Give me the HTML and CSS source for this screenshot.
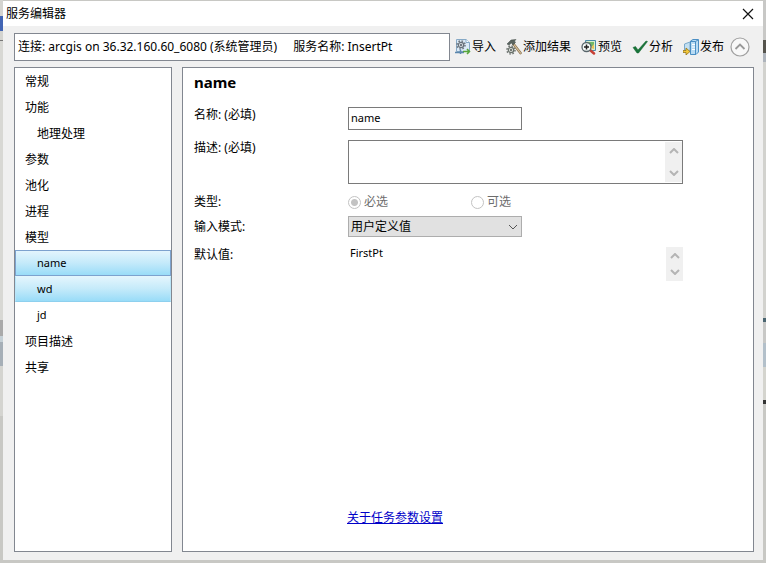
FILE: index.html
```html
<!DOCTYPE html>
<html lang="zh-CN">
<head>
    <meta charset="utf-8">
    <title>服务编辑器</title>
    <link rel="stylesheet" href="styles.css">
</head>
<body>

<div class="window">
  <header class="titlebar">
    <span>服务编辑器</span>
    <button class="close" type="button" aria-label="关闭">
      <svg width="12" height="12" viewBox="0 0 12 12"><path d="M1 1L11 11M11 1L1 11" stroke="#111" stroke-width="1.2"/></svg>
    </button>
  </header>

  <div class="topbar">
    <div class="connection">
      <span>连接: arcgis on 36.32.160.60_6080 (系统管理员)</span>
      <span>服务名称: InsertPt</span>
    </div>
    <div class="toolbar">
      <button class="tool" type="button">
        <svg width="16" height="16" viewBox="0 0 16 16">
          <path d="M1.500 .500H11L14.500 3.500V12.500H1.500Z" fill="#dcebf7" stroke="#86a9c6"/>
          <path d="M11 .500V3.500H14.500" fill="#fff" stroke="#86a9c6"/>
          <circle cx="6" cy="6" r="4" fill="none" stroke="#747c85" stroke-width="1.600" stroke-dasharray="1.600 1.540"/>
          <circle cx="6" cy="6" r="2.700" fill="#d5dade" stroke="#68727c" stroke-width="1.200"/>
          <circle cx="6" cy="6" r="1" fill="#505a64"/>
          <path d="M0 13.500H9M5.500 10.500V15" stroke="#5c87ad" stroke-width="1.500"/>
          <path d="M8 12.500H14M12 10L14.500 12.500L12 15" fill="none" stroke="#57a63b" stroke-width="1.500"/>
        </svg>导入
      </button>
      <button class="tool" type="button">
        <svg width="16" height="16" viewBox="0 0 16 16">
          <circle cx="5" cy="11" r="4" fill="none" stroke="#747a76" stroke-width="1.600" stroke-dasharray="1.600 1.540"/>
          <circle cx="5" cy="11" r="2.700" fill="#d9dcd8" stroke="#68706a" stroke-width="1.200"/>
          <circle cx="5" cy="11" r="1" fill="#505750"/>
          <path d="M7.500 5L14.500 14" stroke="#8a7350" stroke-width="2.600" stroke-linecap="round"/>
          <path d="M7.500 5L14.500 14" stroke="#d9c49f" stroke-width="1.200" stroke-linecap="round"/>
          <path d="M1 5L5 1L10 .500L8.500 2L9.500 3.500L7 6L5.500 4L3 6Z" fill="#59635f" stroke="#3f4844" stroke-width=".5"/>
        </svg>添加结果
      </button>
      <button class="tool" type="button">
        <svg width="16" height="16" viewBox="0 0 16 16">
          <path d="M4.500 1.500H14.500V11.500H4.500Z" fill="#d8efce" stroke="#4b8ba8"/>
          <path d="M6 3H13V6L10 8L8 5L6 6Z" fill="#72b869"/>
          <path d="M10 9L13 5V10Z" fill="#eec04f"/>
          <path d="M9 11L13 14.500" stroke="#c63f34" stroke-width="2.500" stroke-linecap="round"/>
          <circle cx="5.500" cy="8" r="4.500" fill="#f4faf7" stroke="#58656a" stroke-width="1.300"/>
          <path d="M3 8H8M5.500 5.500V10.500" stroke="#222" stroke-width="1.500"/>
        </svg>预览
      </button>
      <button class="tool" type="button">
        <svg width="16" height="16" viewBox="0 0 16 16">
          <path d="M1 8.500L3.500 7.500L6 11L14 2L15.500 2.500L6.500 14H5Z" fill="#19743a" stroke="#14642c" stroke-width=".5"/>
        </svg>分析
      </button>
      <button class="tool" type="button">
        <svg width="16" height="16" viewBox="0 0 16 16">
          <path d="M1.500 5L7 3V12L1.500 11Z" fill="#c2dff1" stroke="#79a9cc"/>
          <path d="M7.500 2L10 .500H15.500V13L13 15.500H7.500Z" fill="#b8dbf3" stroke="#4b8fc4"/>
          <path d="M8 2.500H12.500V15M12.500 2.500L15 1" fill="none" stroke="#4b8fc4"/>
          <path d="M9 5.500H12M9 8H12M9 10.500H12" stroke="#fff"/>
          <path d="M0 11.500H3V9L7 12.500L3 16V13.500H0Z" fill="#f4c83b" stroke="#94731b" stroke-width=".8"/>
        </svg>发布
      </button>
      <button class="collapse" type="button" aria-label="折叠">
        <svg width="20" height="20" viewBox="0 0 20 20">
          <circle cx="10" cy="10" r="9" fill="#f8f8f8" stroke="#a0a0a0" stroke-width="1.200"/>
          <path d="M5.500 12L10 7.500L14.500 12" fill="none" stroke="#999" stroke-width="1.800"/>
        </svg>
      </button>
    </div>
  </div>

  <div class="content">
    <nav class="sidebar">
      <a href="#">常规</a>
      <a href="#">功能</a>
      <a class="child" href="#">地理处理</a>
      <a href="#">参数</a>
      <a href="#">池化</a>
      <a href="#">进程</a>
      <a href="#">模型</a>
      <a class="child param selected current" href="#">name</a>
      <a class="child param selected" href="#">wd</a>
      <a class="child param" href="#">jd</a>
      <a href="#">项目描述</a>
      <a href="#">共享</a>
    </nav>

    <main class="panel">
      <h1>name</h1>
      <form>
        <div class="row">
          <label for="name">名称: (必填)</label>
          <input class="text" id="name" type="text" value="name">
        </div>
        <div class="row">
          <label for="desc">描述: (必填)</label>
          <div class="area boxed">
            <textarea id="desc"></textarea>
            <div class="scroll">
              <svg width="10" height="6" viewBox="0 0 10 6"><path d="M1 5L5 1L9 5"/></svg>
              <svg width="10" height="6" viewBox="0 0 10 6"><path d="M1 1L5 5L9 1"/></svg>
            </div>
          </div>
        </div>
        <div class="row tight" role="radiogroup" aria-labelledby="type">
          <span class="label" id="type">类型:</span>
          <div class="radios">
            <label><input type="radio" name="type" checked disabled>必选</label>
            <label><input type="radio" name="type" disabled>可选</label>
          </div>
        </div>
        <div class="row middle">
          <label for="mode">输入模式:</label>
          <div class="dropdown">
            <select id="mode">
              <option>用户定义值</option>
            </select>
            <svg width="10" height="6" viewBox="0 0 10 6"><path d="M1 1L5 5L9 1"/></svg>
          </div>
        </div>
        <div class="row">
          <label for="default">默认值:</label>
          <div class="area">
            <textarea id="default">FirstPt</textarea>
            <div class="scroll">
              <svg width="10" height="6" viewBox="0 0 10 6"><path d="M1 5L5 1L9 5"/></svg>
              <svg width="10" height="6" viewBox="0 0 10 6"><path d="M1 1L5 5L9 1"/></svg>
            </div>
          </div>
        </div>
      </form>
      <a class="help" href="#">关于任务参数设置</a>
    </main>
  </div>
</div>

</body>
</html>
```
FILE: styles.css
```css
* {
  box-sizing: border-box;
}

/* the desktop shows as a thin edge round the window */
body {
  margin: 0;
  padding: 1px 3px 3px;
  min-height: 100vh;
  display: flex;
  background:
    linear-gradient(#d4d4d0 16px, #4265b4 16px, #4265b4 31px, #d4d4d0 31px, #d4d4d0 40px, #777 40px, #777 41px, #d8d8d4 41px, #d8d8d4 320px, #aaa 320px, #aaa 336px, #c5d0d6 336px, #c5d0d6 342px, #a6afb7 342px, #a6afb7 366px, #d4d4d0 366px, #d4d4d0 416px, #c8c8c4 416px) left / 3px 100% no-repeat,
    linear-gradient(#c8c8c6 40px, #55534c 40px, #55534c 53px, #aeb4bc 53px, #aeb4bc 62px, #d2d2ce 62px, #d2d2ce 318px, #4a6570 318px, #4a6570 322px, #c8c8c6 322px, #c8c8c6 343px, #b3c0ca 343px, #b3c0ca 367px, #d4d4ce 367px, #d4d4ce 400px, #333 400px, #333 404px, #c8c8c4 404px) right / 3px 100% no-repeat,
    #c8c8c4;
  font-family: "Noto Sans", "Noto Sans CJK SC", sans-serif;
  font-size: 12px;
  line-height: 16px;
  color: #000;
}

button, input, select, textarea {
  font: inherit;
  color: inherit;
}

button {
  border: 0;
  padding: 0;
  background: none;
}

svg {
  display: block;
  flex: none;
}

.window {
  flex: 1;
  display: flex;
  flex-direction: column;
  background: #f0f0f0;
}

.titlebar {
  display: flex;
  justify-content: space-between;
  align-items: center;
  height: 25px;
  padding: 0 9px 0 3px;
  background: #fff;
}

.topbar {
  display: flex;
  align-items: center;
  gap: 5px;
  padding: 7px 13px 6px 11px;
}

.connection {
  flex: 1;
  display: flex;
  align-items: center;
  gap: 16px;
  height: 28px;
  padding: 0 3px;
  border: 1px solid #828790;
  background: #fff;
  white-space: nowrap;
}

.toolbar {
  display: flex;
  align-items: center;
  gap: 10px;
}

.tool {
  display: flex;
  align-items: center;
  gap: 1px;
  white-space: nowrap;
}

.collapse {
  margin-left: -4px;
}

.content {
  flex: 1;
  display: flex;
  gap: 10px;
  padding: 0 9px 8px 11px;
}

.sidebar {
  width: 158px;
  border: 1px solid #828790;
  background: #fff;
}

.sidebar a {
  display: block;
  height: 26px;
  padding: 5px 9px 3px;
  border: 1px solid transparent;
  color: #000;
  text-decoration: none;
}

.sidebar .child {
  padding-left: 21px;
}

.sidebar .param {
  padding-top: 4px;
  font-size: 11px;
}

.sidebar .selected {
  border-color: #e2f6fd #b9e5f8 #8ed0ee;
  background: linear-gradient(#e3f5fd, #c4eafa 50%, #99dcf8);
}

.sidebar .current {
  border-color: #7da2ce;
}

.panel {
  flex: 1;
  display: flex;
  flex-direction: column;
  padding: 0 11px 25px;
  border: 1px solid #828790;
  background: #fff;
}

h1 {
  margin: 4px 0 15px;
  font-size: 15px;
  line-height: 20px;
}

.row {
  display: flex;
  align-items: flex-start;
  margin-bottom: 10px;
}

.row > label, .label {
  width: 154px;
}

.tight {
  margin-bottom: 6px;
}

.middle {
  align-items: center;
}

.text {
  width: 174px;
  height: 23px;
  padding: 0 2px 2px;
  border: 1px solid #7a7a7a;
  font-size: 11px;
}

.area {
  display: flex;
  width: 335px;
  height: 34px;
}

.boxed {
  height: 44px;
  padding: 1px 0;
  border: 1px solid #7a7a7a;
}

textarea {
  flex: 1;
  padding: 0 2px;
  border: 0;
  background: none;
  resize: none;
  overflow: hidden;
  font-size: 11px;
  line-height: 12px;
}

.scroll {
  display: flex;
  flex-direction: column;
  justify-content: space-between;
  align-items: center;
  width: 17px;
  padding: 6px 0;
  background: #f0f0f0;
}

.scroll path {
  fill: none;
  stroke: #b4b4b4;
  stroke-width: 2;
}

.radios {
  display: flex;
  color: #6d6d6d;
}

.radios label {
  display: flex;
  align-items: center;
  gap: 3px;
  width: 123px;
}

.radios input {
  appearance: none;
  width: 13px;
  height: 13px;
  margin: 0;
  border: 1px solid #c3c3c3;
  border-radius: 50%;
  background: #fff;
}

.radios input:checked {
  background: radial-gradient(#c3c3c3 3px, #fff 4px);
}

.dropdown {
  display: grid;
  align-items: center;
  width: 174px;
}

.dropdown select, .dropdown svg {
  grid-area: 1 / 1;
}

.dropdown select {
  appearance: none;
  height: 21px;
  padding: 0 2px;
  border: 1px solid #adadad;
  border-radius: 0;
  background: #e1e1e1;
}

.dropdown svg {
  justify-self: end;
  margin-right: 4px;
  pointer-events: none;
}

.dropdown path {
  fill: none;
  stroke: #555;
}

.help {
  align-self: flex-start;
  margin-top: auto;
  margin-left: 153px;
  color: #0000c8;
}
```
